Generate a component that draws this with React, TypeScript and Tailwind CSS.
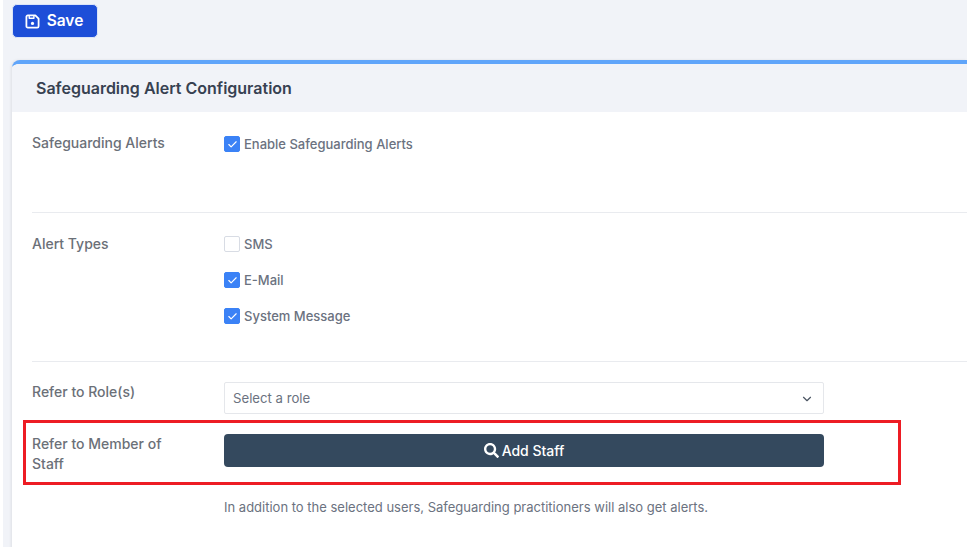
import { ChevronDown, Check } from "lucide-react";
import { FaSearch } from "react-icons/fa";

function Box({ checked, label }: { checked: boolean; label: string }) {
  return (
    <div className="flex h-4 items-center">
      <span className={`flex h-4 w-4 items-center justify-center rounded-[2px] border ${checked ? "border-[#3b82f6] bg-[#3b82f6]" : "border-[#d8dce4] bg-white"}`}>
        {checked && <Check size={11} strokeWidth={2.5} className="text-white" />}
      </span>
      <span className="ml-[4px] text-[13px] font-medium leading-4 text-[#6b7280]">{label}</span>
    </div>
  );
}

const labelClass = "w-[192px] text-[14px] font-medium leading-5 text-[#6b7078]";

export default function App() {
  return (
    <div className="relative h-[547px] w-[967px] overflow-hidden bg-white font-['Inter',sans-serif]">
      <div className="ml-[3px] h-full bg-[#f1f3f8] pl-[9px] pt-[4px]">
        <button className="flex h-[34px] w-[86px] items-center justify-center gap-[7px] rounded-[5px] border border-[#dbe4f8] bg-[#1d4ed8] pr-[2px] text-[15.5px] font-semibold text-white">
          <svg width="15" height="15" viewBox="0 0 16 16" fill="none" stroke="currentColor" strokeWidth="1.9" strokeLinejoin="round">
            <path d="M3 1.5h8l3.5 3.5v8a1.5 1.5 0 0 1-1.5 1.5H3A1.5 1.5 0 0 1 1.5 13V3A1.5 1.5 0 0 1 3 1.5Z" />
            <path d="M4.5 1.8v2.7h5V1.8" strokeWidth="1.5" />
            <circle cx="8" cy="10" r="1.7" fill="currentColor" stroke="none" />
          </svg>
          Save
        </button>
        <div className="mt-[22px] h-[600px] overflow-hidden rounded-tl-[8px] border-t-[4px] border-[#60a5fa] bg-white shadow-[-1px_0_3px_rgba(0,0,0,0.08)]">
          <div className="flex h-[48px] items-center bg-[#f1f3f8] pl-[24px] text-[16px] font-semibold text-[#374151]">
            Safeguarding Alert Configuration
          </div>
          <div className="pl-[20px]">
            <div className="flex h-[101px] border-b border-[#e9ebef] pt-[21px]">
              <div className={labelClass}>Safeguarding Alerts</div>
              <div className="pt-[3px]"><Box checked label="Enable Safeguarding Alerts" /></div>
            </div>
            <div className="flex h-[149px] border-b border-[#e9ebef] pt-[21px]">
              <div className={labelClass}>Alert Types</div>
              <div className="flex flex-col gap-5 pt-[2px]">
                <Box checked={false} label="SMS" />
                <Box checked label="E-Mail" />
                <Box checked label="System Message" />
              </div>
            </div>
            <div className="flex pt-[20px]">
              <div className={labelClass}>Refer to Role(s)</div>
              <div className="flex h-[32px] w-[600px] items-center justify-between rounded-[2px] border border-[#e5e7eb] bg-white pb-0 pl-2 pr-[9px] pt-[1px] text-[13.2px] text-[#6b7280]">
                Select a role
                <ChevronDown size={14} strokeWidth={2} className="text-[#4b5563]" />
              </div>
            </div>
            <div className="mt-5 flex">
              <div className={labelClass}>
                Refer to Member of<br />Staff
              </div>
              <button className="flex h-[33px] w-[600px] items-center justify-center gap-[3px] rounded-[4px] bg-[#34495e] text-[14px] font-medium text-white">
                <FaSearch size={15} />
                Add Staff
              </button>
            </div>
            <p className="ml-[192px] mt-[23px] text-[13px] leading-5 text-[#6b7280]">
              In addition to the selected users, Safeguarding practitioners will also get alerts.
            </p>
          </div>
        </div>
      </div>
      <div className="absolute left-[23px] top-[420px] h-[65px] w-[878px] border-[3px] border-[#ed1c24]" />
    </div>
  );
}
